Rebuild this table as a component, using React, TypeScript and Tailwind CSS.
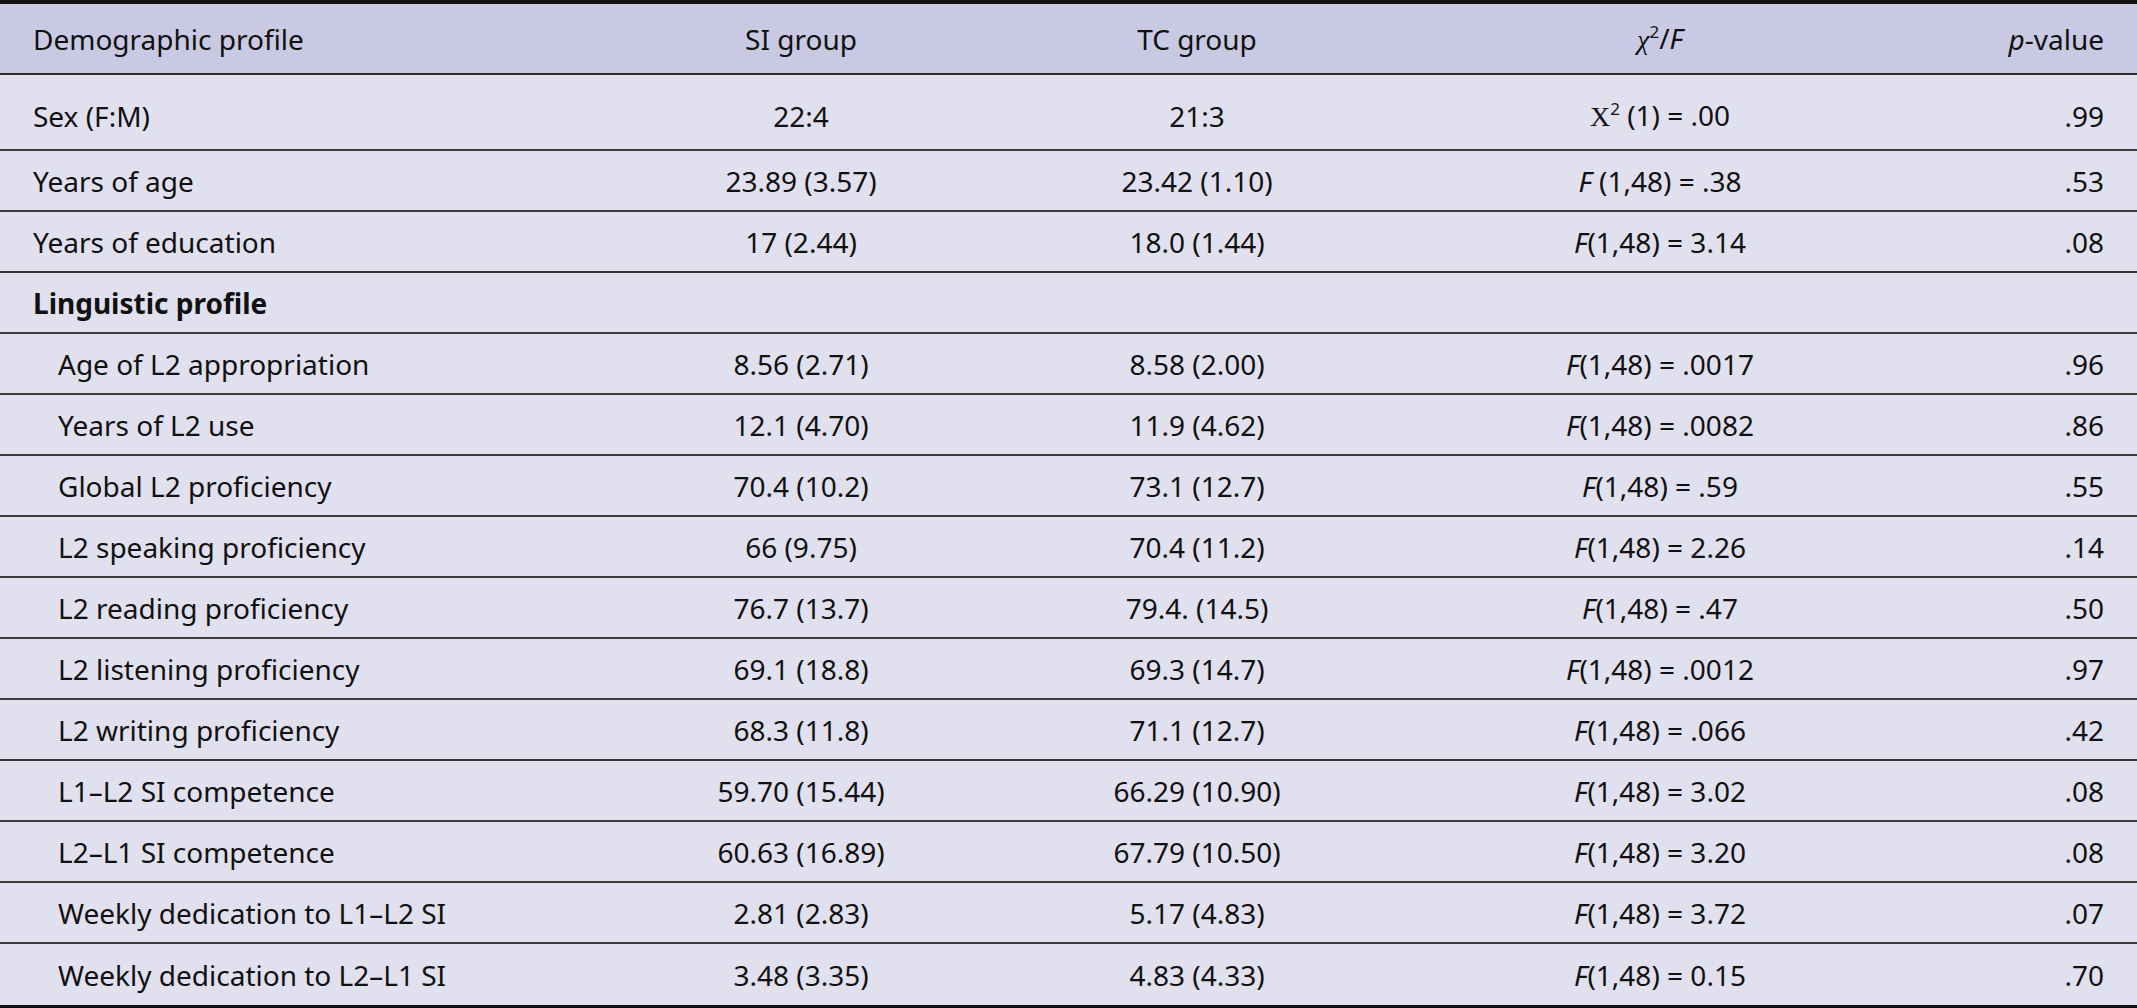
import React from "react";

type Row = {
  label: React.ReactNode;
  si?: string;
  tc?: string;
  stat?: React.ReactNode;
  p?: string;
  indent?: boolean;
  bold?: boolean;
};

const F = (rest: string, space = false) => (
  <>
    <i>F</i>
    {space ? " " : ""}
    {rest}
  </>
);

const rows: Row[] = [
  {
    label: "Sex (F:M)",
    si: "22:4",
    tc: "21:3",
    stat: (
      <>
        <span className="font-['Liberation_Serif',serif]">Χ</span>
        <span className="text-[17px] relative -top-[11px]">2</span> (1) = .00
      </>
    ),
    p: ".99",
  },
  { label: "Years of age", si: "23.89 (3.57)", tc: "23.42 (1.10)", stat: F("(1,48) = .38", true), p: ".53" },
  { label: "Years of education", si: "17 (2.44)", tc: "18.0 (1.44)", stat: F("(1,48) = 3.14"), p: ".08" },
  { label: "Linguistic profile", bold: true },
  { label: "Age of L2 appropriation", si: "8.56 (2.71)", tc: "8.58 (2.00)", stat: F("(1,48) = .0017"), p: ".96", indent: true },
  { label: "Years of L2 use", si: "12.1 (4.70)", tc: "11.9 (4.62)", stat: F("(1,48) = .0082"), p: ".86", indent: true },
  { label: "Global L2 proficiency", si: "70.4 (10.2)", tc: "73.1 (12.7)", stat: F("(1,48) = .59"), p: ".55", indent: true },
  { label: "L2 speaking proficiency", si: "66 (9.75)", tc: "70.4 (11.2)", stat: F("(1,48) = 2.26"), p: ".14", indent: true },
  { label: "L2 reading proficiency", si: "76.7 (13.7)", tc: "79.4. (14.5)", stat: F("(1,48) = .47"), p: ".50", indent: true },
  { label: "L2 listening proficiency", si: "69.1 (18.8)", tc: "69.3 (14.7)", stat: F("(1,48) = .0012"), p: ".97", indent: true },
  { label: "L2 writing proficiency", si: "68.3 (11.8)", tc: "71.1 (12.7)", stat: F("(1,48) = .066"), p: ".42", indent: true },
  { label: "L1–L2 SI competence", si: "59.70 (15.44)", tc: "66.29 (10.90)", stat: F("(1,48) = 3.02"), p: ".08", indent: true },
  { label: "L2–L1 SI competence", si: "60.63 (16.89)", tc: "67.79 (10.50)", stat: F("(1,48) = 3.20"), p: ".08", indent: true },
  { label: "Weekly dedication to L1–L2 SI", si: "2.81 (2.83)", tc: "5.17 (4.83)", stat: F("(1,48) = 3.72"), p: ".07", indent: true },
  { label: "Weekly dedication to L2–L1 SI", si: "3.48 (3.35)", tc: "4.83 (4.33)", stat: F("(1,48) = 0.15"), p: ".70", indent: true },
];

const grid = "grid grid-cols-[600px_402px_390px_536px_1fr] items-center";

export default function App() {
  return (
    <div className="w-[2137px] h-[1008px] bg-white font-['Noto_Sans',sans-serif] text-[28px] text-[#111] leading-none">
      <div className="border-t-[4px] border-b-[3px] border-[#111] bg-[#e0e0ee]">
        <div className={`${grid} h-[71px] bg-[#c9c9e3] border-b-2 border-[#2a2a2a]`}>
          <div className="pl-[33px]">Demographic profile</div>
          <div className="text-center">SI group</div>
          <div className="text-center">TC group</div>
          <div className="text-center">
            <i className="font-['Liberation_Serif',serif]">χ</i>
            <span className="text-[17px] relative -top-[11px]">2</span>/<i>F</i>
          </div>
          <div className="text-right pr-[33px]">
            <i>p</i>-value
          </div>
        </div>
        {rows.map((r, i) => (
          <div
            key={i}
            className={`${grid} ${i === 0 ? "h-[76px] pt-[8px]" : "h-[61px]"} ${i < rows.length - 1 ? "border-b-2 border-[#3a3a3a]" : ""}`}
          >
            <div className={`${r.indent ? "pl-[58px]" : "pl-[33px]"} ${r.bold ? "font-bold" : ""}`}>{r.label}</div>
            <div className="text-center">{r.si}</div>
            <div className="text-center">{r.tc}</div>
            <div className="text-center">{r.stat}</div>
            <div className="text-right pr-[33px]">{r.p}</div>
          </div>
        ))}
      </div>
    </div>
  );
}
